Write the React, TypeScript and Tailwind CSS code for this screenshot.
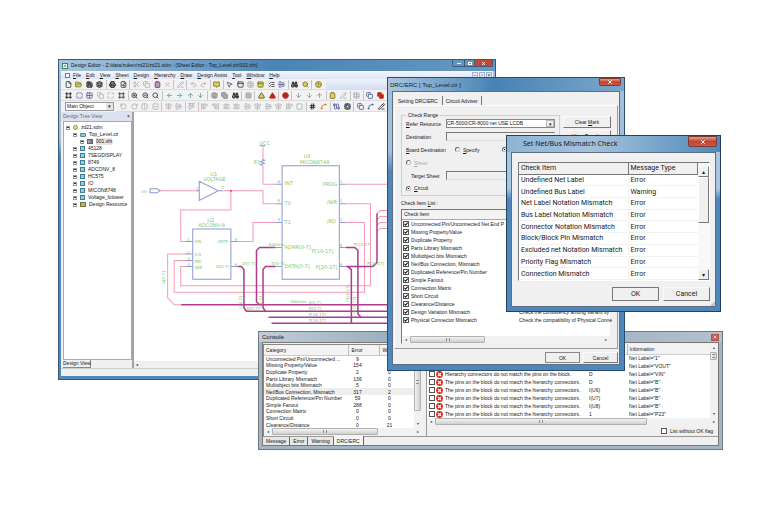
import React from 'react'
import {
  ArrowDown, ArrowLeft, ArrowRight, ArrowUp, AlignCenterHorizontal, AlignCenterVertical, AlignEndVertical,
  AlignStartHorizontal, AlignStartVertical, AlignVerticalDistributeCenter, Ban, BookOpen, Binoculars, Cable,
  CircleHelp, Copy, Cpu, File, FileSearch, FlipHorizontal, FlipVertical, FolderOpen, Frame, Grid2x2, Hash,
  Layers, ListChecks, Maximize, MousePointer2, PanelTop, PencilLine, Printer, Redo2, RotateCcw, RotateCw, Save,
  Scissors, Spline, Square, SquareDashed, Table, Triangle, Undo2, X, ZoomIn, ZoomOut, Search, Clipboard,
} from 'lucide-react'
import type { LucideIcon } from 'lucide-react'

type Tool = [string, LucideIcon, string]

const DARK = 'text-[#3c4048]'
const GREY = 'text-[#b4b4b8]'
const OLIVE = 'text-[#7d7a2c] fill-[#d8d060]'
const BLUE = 'text-[#5660a8]'
const CYAN = 'text-[#4aaec4]'
const RED = 'text-[#d83a2c] fill-[#a82820]'
const BLACK = 'text-[#222] fill-[#888]'

const fileTools: Tool[][] = [
  [['New', File, DARK], ['Open', FolderOpen, OLIVE], ['Save', Save, BLACK], ['Save all', Layers, BLACK]],
  [['Print', Printer, BLACK], ['Preview', FileSearch, DARK]],
  [['Cut', Scissors, GREY], ['Copy', Copy, GREY], ['Paste', Clipboard, 'text-[#6a4a78] fill-[#b79ab5]'], ['Delete', X, GREY]],
  [['Properties', PencilLine, GREY]],
  [['Undo', Undo2, GREY], ['Redo', Redo2, GREY]],
  [['Library', BookOpen, OLIVE]],
  [['Select', MousePointer2, BLUE], ['Window', PanelTop, DARK], ['List', Table, GREY], ['Edit table', PanelTop, OLIVE], ['Check', ListChecks, DARK], ['Hierarchy', AlignCenterHorizontal, BLUE]],
  [['Find', Binoculars, BLACK], ['Find next', Search, OLIVE]],
  [['Help', CircleHelp, OLIVE]],
]

const viewTools: Tool[][] = [
  [['Fit', Frame, 'text-[#222]'], ['Area', SquareDashed, BLUE], ['Grid', Grid2x2, BLUE], ['Layers', Copy, GREY], ['Extents', Maximize, GREY], ['Redraw', Frame, DARK]],
  [['Zoom in', ZoomIn, DARK], ['Zoom out', ZoomOut, DARK], ['Zoom', Search, DARK]],
  [['Pan left', ArrowLeft, CYAN], ['Pan right', ArrowRight, CYAN], ['Pan up', ArrowUp, CYAN], ['Pan down', ArrowDown, CYAN]],
  [['Stack', Layers, 'text-[#888] fill-[#aaa]'], ['Sheets', Copy, 'text-[#888] fill-[#aaa]'], ['Search', Binoculars, BLACK]],
  [['Stop', Square, 'text-[#b4b4b8] fill-[#b4b4b8]']],
  [['Mark', Triangle, 'text-[#55552c] fill-[#d8d060]'], ['Clear mark', Triangle, RED]],
  [['Cancel check', Ban, RED]],
  [['Down', ArrowDown, 'text-[#999]'], ['Next', ArrowDown, 'text-[#999]'], ['Up', ArrowUp, 'text-[#999]']],
  [['Note', Clipboard, OLIVE], ['Draft', PencilLine, GREY]],
  [['Table', Table, GREY]],
  [['Net', Copy, BLUE], ['Error net', Copy, RED]],
]

const objectTools: Tool[][] = [
  [['Rotate left', RotateCcw, GREY], ['Rotate right', RotateCw, GREY], ['Mirror', FlipHorizontal, GREY], ['Flip', FlipVertical, GREY]],
  [['Group', AlignCenterVertical, GREY], ['Ungroup', AlignCenterHorizontal, GREY]],
  [['Branch', AlignStartHorizontal, GREY]],
  [['Left', AlignStartVertical, GREY], ['Right', AlignEndVertical, GREY], ['Top', AlignVerticalDistributeCenter, GREY], ['Bottom', AlignVerticalDistributeCenter, GREY], ['Middle', AlignCenterHorizontal, GREY], ['Centre', AlignCenterVertical, GREY], ['Spread', AlignCenterHorizontal, GREY], ['Spread all', AlignCenterVertical, GREY], ['Pin', AlignStartVertical, GREY], ['Box', Square, GREY]],
  [['Show grid', Hash, 'text-[#222]'], ['Snap', Spline, 'text-[#d07a3a]']],
  [['Gate', Cable, BLUE], ['Part', Cpu, DARK]],
  [['Wire', Copy, BLUE], ['Bus', Spline, BLUE], ['Draw', PencilLine, DARK]],
]

const tree = ['45128', '7SEGDISPLAY', '8749', 'ADCONV_8', 'HC575', 'IO', 'MICON8748', 'Voltage_folower']

const checks = [
  'Unconnected Pin/Unconnected Net End P', 'Missing Property/Value', 'Duplicate Property',
  'Parts Library Mismatch', 'Multiobject bits Mismatch', 'Net/Bus Connection, Mismatch',
  'Duplicated Reference/Pin Number', 'Simple Fanout', 'Connection Matrix', 'Short Circuit',
  'Clearance/Distance', 'Design Variation Mismatch', 'Physical Connector Mismatch',
]

const totals: [string, number, string][] = [
  ['Unconnected Pin/Unconnected ...', 9, ''],
  ['Missing Property/Value', 154, '2'],
  ['Duplicate Property', 2, '0'],
  ['Parts Library Mismatch', 136, '0'],
  ['Multiobject bits Mismatch', 5, '0'],
  ['Net/Bus Connection, Mismatch', 317, '2'],
  ['Duplicated Reference/Pin Number', 59, '0'],
  ['Simple Fanout', 288, '0'],
  ['Connection Matrix', 0, '0'],
  ['Short Circuit', 0, '0'],
  ['Clearance/Distance', 0, '21'],
]

const PINS = 'The pins on the block do not match the hierarchy connectors.'
const messages: [string, string, string][] = [
  ['', '', '1'],
  ['', '', 'VOUT'],
  ['Hierarchy connectors do not match the pins on the block.', 'D', 'VIN'],
  [PINS, 'D', 'B'],
  [PINS, 'I(U6)', 'B'],
  [PINS, 'I(U7)', 'B'],
  [PINS, 'I(U8)', 'B'],
  [PINS, '1', 'P23'],
]

const mismatch = [
  ['Undefined Net Label', 'Error'],
  ['Undefined Bus Label', 'Warning'],
  ['Net Label Notation Mismatch', 'Error'],
  ['Bus Label Notation Mismatch', 'Error'],
  ['Connector Notation Mismatch', 'Error'],
  ['Block/Block Pin Mismatch', 'Error'],
  ['Excluded net Notation Mismatch', 'Error'],
  ['Priority Flag Mismatch', 'Error'],
  ['Connection Mismatch', 'Error'],
]

const Toolbar = ({ groups, className }: { groups: Tool[][]; className: string }) => (
  <div className={`flex h-[11px] items-center justify-between border-b border-[#dcdcdc] bg-[#f2f2f3] px-[3px] ${className}`}>
    {groups.map((group, i) => (
      <React.Fragment key={i}>
        {i > 0 && <span className="h-[9px] w-px bg-[#c4c4c8]" />}
        {group.map(([name, Icon, color]) => (
          <button key={name} aria-label={name} className="flex h-[9px] w-[9px] items-center justify-center">
            <Icon size={7} strokeWidth={3} className={color} />
          </button>
        ))}
      </React.Fragment>
    ))}
  </div>
)

const HScroll = ({ thumb, className = '' }: { thumb: string; className?: string }) => (
  <div className={`flex h-[8px] items-center bg-[#f1f1f1] text-[4px] leading-none text-[#444] ${className}`}>
    <span className="w-[8px] text-center">◂</span>
    <div className="h-full flex-1">
      <div className={`flex h-[7px] items-center justify-center rounded-[1px] border border-[#b0b0b0] bg-linear-to-b from-[#f4f4f4] to-[#cfcfd1] ${thumb}`}>
        <span className="h-[3px] w-[4px] border-x border-[#8c8c8c]" />
      </div>
    </div>
    <span className="w-[8px] text-center">▸</span>
  </div>
)

const VScroll = ({ thumb }: { thumb: string }) => (
  <div className="flex w-[8px] shrink-0 flex-col items-center bg-[#f1f1f1] text-[4px] leading-[8px] text-[#444]">
    <span>▴</span>
    <div className="w-full flex-1">
      <div className={`flex w-[7px] items-center justify-center rounded-[1px] border border-[#b0b0b0] bg-linear-to-r from-[#f4f4f4] to-[#cfcfd1] ${thumb}`}>
        <span className="h-[4px] w-[3px] border-y border-[#8c8c8c]" />
      </div>
    </div>
    <span>▾</span>
  </div>
)

const PushButton = ({ children, className }: { children: React.ReactNode; className: string }) => (
  <button className={`flex items-center justify-center border border-[#fafafa] border-r-[#777] border-b-[#777] bg-[#f0f0f0] ${className}`}>
    {children}
  </button>
)

const RedClose = ({ className }: { className: string }) => (
  <button aria-label="Close" className={`flex items-center justify-center rounded-b-[2px] border border-[#7d3a33] bg-linear-to-b from-[#dc9c8c] via-[#c4412c] to-[#c85a42] text-white ${className}`}>
    <X size={6} strokeWidth={4} />
  </button>
)

const Checkbox = ({ label, checked = false }: { label: string; checked?: boolean }) => (
  <span className="relative flex h-[6px] w-[6px] shrink-0">
    <input type="checkbox" aria-label={label} defaultChecked={checked} className="peer h-[6px] w-[6px] appearance-none border border-[#555] bg-white" />
    <svg viewBox="0 0 6 6" className="pointer-events-none absolute inset-0 hidden peer-checked:block" fill="none" stroke="#222" strokeWidth="1.1">
      <path d="M1.3 2.8 2.6 4.2 4.7 1.6" />
    </svg>
  </span>
)

const Radio = ({ label, name = 'range', checked = false, muted = false, hideLabel = false }: { label: string; name?: string; checked?: boolean; muted?: boolean; hideLabel?: boolean }) => (
  <label className={`flex items-center gap-[3px] ${muted ? 'text-[#aaa]' : ''}`}>
    <span className="relative flex h-[5px] w-[5px]">
      <input type="radio" name={name} aria-label={label} defaultChecked={checked} disabled={muted} className="peer h-[5px] w-[5px] appearance-none rounded-full border border-[#c4c4c4] border-t-[#666] border-l-[#666] bg-white" />
      <span className="absolute inset-[2px] hidden bg-black peer-checked:block" />
    </span>
    {!hideLabel && <span><u>{label[0]}</u>{label.slice(1)}</span>}
  </label>
)

// Green schematic annotations
const labels: [number, number, string, number][] = [
  [142, 194, 'vin', 4], [197, 191, '1', 4], [222, 190, '2', 4],
  [211, 177, 'U1', 5], [204, 182, 'VOLTAGE', 5], [208, 223, 'U2', 5], [199, 228, 'ADCONV-8', 5],
  [195, 243, 'VIN', 4], [195, 256, '/CS', 4], [195, 263, '/RD', 4], [195, 269, '/WR', 4],
  [218, 243, '/INTR', 4], [217, 268, 'D[0-7]', 4],
  [188, 241, '1', 4], [188, 254, '2', 4], [188, 260, '3', 4], [188, 266, '4', 4], [235, 241, '5', 4], [235, 266, '6', 4],
  [260, 146, 'VCC', 5], [254, 165, 'R1', 5], [304, 159, 'U3', 5], [300, 165, 'MICON8748', 5],
  [285, 186, 'INT', 5], [285, 206, 'T0', 5], [285, 225, 'T1', 5], [285, 249, 'ADRR[0-7]', 5], [285, 268, 'DATA[0-7]', 5],
  [323, 187, 'PROG', 5], [327, 205, '/WR', 5], [327, 224, '/RD', 5], [312, 253, 'P[10-17]', 5], [316, 269, 'P[20-27]', 5],
  [278, 184, '6', 4], [278, 203, '8', 4], [278, 222, '9', 4], [340, 184, '1', 4], [340, 203, '1', 4], [340, 222, '2', 4], [340, 247, '5', 4], [340, 266, '6', 4],
  [269, 246, 'Address', 4], [272, 265, 'D[0-7]', 4], [243, 265, 'D[0-7]', 4], [354, 246, 'P[10-17]', 4], [367, 265, 'P[20-27]', 4],
  [291, 303, 'Address', 4], [309, 304, 'A[0-7]', 4], [309, 310, 'D[0-7]', 4], [309, 316, 'P[10-17]', 4], [309, 322, 'P[20-27]', 4], [247, 310, 'D[0-7]', 4],
]

const Schematic = () => (
  <svg viewBox="135 113 358 248" preserveAspectRatio="xMinYMin slice" className="min-h-0 w-full flex-1 bg-white" fill="none">
    <g stroke="#f59ab3" strokeWidth="1">
      <path d="M161 191.5H198M222 191.5H263.500V204.500H276M231.500 191.500V210.500H181.500V242H188M188 254.500H168.500V298L175 305H182" />
      <path d="M188 261H175V292.500H364.500V223H346M188 267H181.500V286H370.500V204.500H346M238 242H253.500V223H276M263.500 147V160M263.500 166V185H276M346 185H387" />
      <path d="M377 215 380 211H387M377 221 380 217H387M377 226 380 223H387M377 232 380 229H387" />
    </g>
    <g stroke="#b03a8c" strokeWidth="1.5">
      <path d="M182 305H420M238 267H242L244.500 270V308L247 311.500H420M276 248H260L257 251V302L260 305M276 267H266L263.500 270V308L266 311.500M269 317.500H420" />
      <path d="M346 248H355L358 251V314L361 317.500M346 267H373L377 263V214M348 267 351.500 270V323.500M272 323.500H420" />
    </g>
    <g stroke="#8f97d4" strokeWidth="1">
      <path d="M151 189.500H158L161 191.500 158 193.500H151ZM200 182V201L219 191.500ZM197 191.500H200M219 191.500H223" />
      <path d="M193.500 229.500H231.500V279.500H193.500ZM282.500 166.500H339.500V279.500H282.500ZM187 242H193M187 254.500H193M187 261H193M187 267H193M232 242H238M232 267H238" />
      <path d="M276 185H282M276 204.500H282M276 223H282M276 248H282M276 267H282M340 185H346M340 204.500H346M340 223H346M340 248H346M340 267H346M260 146.500H266M263 160 265 161 261 162.500 265 164 261 165.500 263 166" />
    </g>
    <circle cx="231.500" cy="191.500" r="1" fill="#d0407c" />
    <g fill="#7cc769" fontFamily="'DejaVu Sans', sans-serif">
      {labels.map(([x, y, text, size], i) => (
        <text key={i} x={x} y={y} fontSize={size}>{text}</text>
      ))}
      <text transform="translate(166 284) rotate(-90)" fontSize="4">A[0-7]</text>
      <text transform="translate(243 309) rotate(-90)" fontSize="4">D[0-7]</text>
      <text transform="translate(262 309) rotate(-90)" fontSize="4">D[0-7]</text>
      <text transform="translate(349 302) rotate(-90)" fontSize="4">P[20-27]</text>
      <text transform="translate(356 314) rotate(-90)" fontSize="4">P[10-17]</text>
    </g>
  </svg>
)

const TreeRow = ({ name, depth, icon }: { name: string; depth: string; icon: React.ReactNode }) => (
  <li className={`flex flex-1 items-center gap-[3px] whitespace-nowrap ${depth}`}>
    <span className="flex h-[4px] w-[4px] items-center justify-center border border-[#999]"><i className="h-px w-[2px] bg-[#333]" /></span>
    {icon}
    <span className={name === '001.sht' ? 'bg-[#e4e4e4]' : ''}>{name}</span>
  </li>
)

const PartIcon = () => <span className="h-[5px] w-[5px] border border-[#3d7f96] bg-[#8fd0dd]" />
const FolderIcon = () => <span className="h-[4px] w-[6px] rounded-[1px] border border-[#4d8b93] bg-[#8ecbd2]" />

const MainWindow = () => (
  <section className="absolute top-[59px] left-[58px] flex h-[321px] w-[438px] flex-col border border-[#41576e] bg-linear-to-b from-[#a5bfd9] from-25% to-[#5089bd] to-30% px-[2px] pb-[3px] text-[5px] leading-[7px]">
    <header className="-mx-[2px] flex h-[11px] items-center gap-[3px] bg-linear-to-r from-[#a9c6df] via-[#4a84b5] via-50% to-[#6698c2] pl-[3px]">
      <span className="flex h-[6px] w-[6px] items-center justify-center border border-[#386] bg-[#dfe] text-[4px]">z</span>
      <h1 className="flex-1 whitespace-nowrap">Design Editor - Z:/data/zuken/zd21/zd21.sdm - [Sheet Editor - Top_Level.cir/001.sht]</h1>
      <div className="mr-[2px] flex h-[7px] self-start rounded-b-[2px] border border-t-0 border-[#3c5a78]">
        <button aria-label="Minimize" className="flex w-[11px] items-center justify-center"><i className="h-px w-[4px] bg-white" /></button>
        <button aria-label="Restore" className="flex w-[11px] items-center justify-center border-x border-[#3c5a78]"><i className="h-[3px] w-[4px] border border-white" /></button>
        <button aria-label="Close" className="flex w-[17px] items-center justify-center bg-[#c8452f] text-white"><X size={5} strokeWidth={4} /></button>
      </div>
    </header>
    <nav className="flex h-[8px] items-center bg-linear-to-b from-[#f5f7fc] to-[#dde3f3] pl-[4px]">
      <span className="mr-[3px] h-[5px] w-[5px] border border-[#667bb4] bg-white" />
      <ul className="flex flex-1 gap-[5px]">
        {['File', 'Edit', 'View', 'Sheet', 'Design', 'Hierarchy', 'Draw', 'Design Assist', 'Tool', 'Window', 'Help'].map(item => (
          <li key={item}><button><u>{item[0]}</u>{item.slice(1)}</button></li>
        ))}
      </ul>
      <div className="flex gap-px pr-[1px]">
        {['–', '▫', '×'].map(mark => (
          <button key={mark} className="flex h-[6px] w-[6px] items-center justify-center border border-[#a4b2ca] bg-[#e4ebf7] text-[5px] leading-none">{mark}</button>
        ))}
      </div>
    </nav>
    <div className="bg-linear-to-b from-[#eff2fb] to-[#d3dcf2]"><Toolbar groups={fileTools} className="w-[265px]" /></div>
    <div className="bg-[#f2f2f3]"><Toolbar groups={viewTools} className="w-[327px]" /></div>
    <div className="flex bg-[#f2f2f3]">
      <select aria-label="Object" className="my-px ml-[4px] h-[9px] w-[49px] appearance-none border border-[#999] bg-white pl-px text-[5px] leading-[7px]">
        <option>Main Object</option>
      </select>
      <span className="-ml-[8px] my-[2px] w-[7px] bg-[#e4e4e4] text-center text-[5px] leading-[7px]">▾</span>
      <Toolbar groups={objectTools} className="ml-[3px] w-[273px]" />
    </div>
    <div className="flex min-h-0 flex-1 bg-[#f0f0f0]">
      <aside className="flex w-[71px] shrink-0 flex-col">
        <h2 className="flex h-[9px] items-center justify-between bg-[#dde3ee] px-[2px] text-[#667]">Design Tree View <span className="text-[#111]">×</span></h2>
        <div className="ml-[2px] flex-1 border border-[#aaa] bg-white">
          <ul className="mt-[2px] flex h-[82px] flex-col pl-[2px]">
            <TreeRow name="zd21.sdm" depth="" icon={<span className="h-[5px] w-[5px] rounded-full border border-[#8d9a2f] bg-[#ece34b]" />} />
            <TreeRow name="Top_Level.cir" depth="pl-[7px]" icon={<FolderIcon />} />
            <TreeRow name="001.sht" depth="pl-[14px]" icon={<span className="h-[5px] w-[6px] border border-[#3d6f96] bg-linear-to-r from-[#8fb0dd] to-[#cf3a3a]" />} />
            {tree.map(name => <TreeRow key={name} name={name} depth="pl-[7px]" icon={<PartIcon />} />)}
            <TreeRow name="Design Resource" depth="pl-[7px]" icon={<span className="h-[5px] w-[6px] border border-[#77733b] bg-[#b9b170]" />} />
          </ul>
        </div>
        <button className="ml-[2px] h-[8px] w-[28px] border-r border-b border-[#888] whitespace-nowrap">Design View</button>
      </aside>
      <div className="flex min-w-0 flex-1 flex-col border-l-2 border-[#a2a2a2]">
        <Schematic />
        <span className="h-[7px] bg-[#efefed] pl-[2px] text-[4px] leading-[7px]">◂</span>
      </div>
    </div>
    <footer className="h-[8px] border-t border-[#ccc] bg-[#f0f0f0]" />
  </section>
)

const Console = () => (
  <section className="absolute top-[331px] left-[258px] flex h-[119px] w-[465px] flex-col border border-[#71777e] bg-[#a6b5c4] px-[3px] pb-[3px] text-[5px] leading-[6px]">
    <header className="-mx-[3px] flex h-[10px] items-center justify-between bg-linear-to-r from-[#c3ccd6] via-[#8aa3b8] via-40% to-[#b4c1ce] px-[3px]">
      <h2 className="text-[6px]">Console</h2>
      <button aria-label="Close" className="flex h-[7px] w-[8px] items-center justify-center border border-[#a55] bg-[#d0604c] text-white"><X size={4} strokeWidth={4} /></button>
    </header>
    <div className="flex min-h-0 flex-1 flex-col border border-[#777] bg-[#f0f0f0] pt-px">
      <div className="flex flex-1 gap-[4px]">
        <div className="flex w-[159px] shrink-0 flex-col self-start border-t border-l border-[#888] bg-white">
          <div className="flex">
            <table className="h-[83px] w-full table-fixed border-collapse">
              <thead>
                <tr className="h-[10px] border-b border-[#ccc] bg-[#f3f3f3]">
                  <th className="w-[84px] border-r border-[#bbb] p-0 pl-[2px] text-left font-normal">Category</th>
                  <th className="w-[31px] border-r border-[#bbb] p-0 pl-[3px] text-left font-normal">Error</th>
                  <th className="p-0 pl-[3px] text-left font-normal">W</th>
                </tr>
              </thead>
              <tbody>
                {totals.map(([name, errors, warnings]) => (
                  <tr key={name} className={name.startsWith('Net/Bus') ? 'bg-[#eeeeee]' : ''}>
                    <td className="p-0 pl-[2px] whitespace-nowrap">{name}</td>
                    <td className="p-0 pr-[12px] text-center">{errors}</td>
                    <td className="p-0 pr-[14px] text-center">{warnings}</td>
                  </tr>
                ))}
              </tbody>
            </table>
            <VScroll thumb="h-[58px]" />
          </div>
          <HScroll thumb="w-[106px]" />
        </div>
        <div className="flex min-w-0 flex-1 flex-col border-l border-[#999]">
          <div className="flex bg-white">
            <table className="w-full table-fixed border-collapse">
              <thead>
                <tr className="h-[10px] border-b border-[#ccc] bg-[#f3f3f3]">
                  <th className="w-[162px] p-0 pl-[2px] text-left font-normal">Message</th>
                  <th className="w-[38px] p-0 text-left font-normal">Object</th>
                  <th className="border-l border-[#bbb] p-0 pl-[2px] text-left font-normal">Information</th>
                </tr>
              </thead>
              <tbody>
                {messages.map(([text, object, label], i) => (
                  <tr key={i} className="h-[8px]">
                    <td className="p-0 pl-[2px]">
                      <div className="flex items-center gap-px whitespace-nowrap">
                        <Checkbox label={`Row ${i + 1}`} />
                        <svg viewBox="0 0 8 8" className="h-[7px] w-[7px] shrink-0"><circle cx="4" cy="4" r="3.900" fill="#d9291f" /><path d="M2.300 2.300 5.700 5.700M5.700 2.300 2.300 5.700" stroke="#fff" strokeWidth="1.300" /></svg>
                        <span className="pl-px">{text}</span>
                      </div>
                    </td>
                    <td className="p-0">{object}</td>
                    <td className="p-0 pl-[2px]">Net Label="{label}"</td>
                  </tr>
                ))}
              </tbody>
            </table>
            <VScroll thumb="h-[8px]" />
          </div>
          <HScroll thumb="w-[212px]" />
          <label className="mr-[5px] flex items-center gap-[3px] self-end pt-[2px]"><Checkbox label="List without OK flag" /> List without OK flag</label>
        </div>
      </div>
      <nav className="flex h-[9px] border-t border-[#999]">
        {['Message', 'Error', 'Warning', 'DRC/ERC'].map(tab => (
          <button key={tab} className={`border-r border-[#666] px-[3px] ${tab === 'DRC/ERC' ? '-mt-px bg-[#f6f6f6]' : 'bg-[#e8e8e8]'}`}>{tab}</button>
        ))}
      </nav>
    </div>
  </section>
)

const DrcDialog = () => (
  <section className="absolute top-[77px] left-[387px] flex h-[294px] w-[238px] flex-col border border-[#2c4c6c] bg-linear-to-b from-[#a3c0da] from-25% to-[#4d87bb] to-32% px-[4px] pb-[5px] text-[5px] leading-[8px]">
    <header className="-mx-[4px] flex h-[13px] justify-between bg-linear-to-r from-[#a9c6df] via-[#4783b5] via-45% to-[#7ca6ca] pl-[2px]">
      <h2 className="pt-[3px] text-[6px]">DRC/ERC [ Top_Level.cir ]</h2>
      <RedClose className="mr-[3px] h-[8px] w-[22px]" />
    </header>
    <div className="flex flex-1 flex-col border border-[#5d6f81] bg-[#f0f0f0] px-px pt-[4px]">
      <nav className="flex h-[9px]">
        <button className="border-r border-[#777] px-[4px]">Setting DRC/ERC</button>
        <button className="border-r border-[#777] px-[3px]">Circuit Adviser</button>
      </nav>
      <div className="flex-1 border border-white border-r-[#999] border-b-[#999] px-[6px] pt-[5px]">
        <div className="flex items-start gap-[3px]">
          <fieldset className="w-[159px] border border-[#cfcfcf] px-[4px] pb-[3px]">
            <legend className="px-[2px]">Check Range</legend>
            <div className="grid grid-cols-[40px_1fr] items-center gap-y-[4px]">
              <label htmlFor="resource"><u>R</u>efer Resource</label>
              <div className="flex h-[9px] border border-[#888] bg-white">
                <select id="resource" className="min-w-0 flex-1 appearance-none text-[5px] leading-[7px]"><option>CR-5000/CR-8000 net USE LCDB</option></select>
                <span className="w-[8px] border border-[#bbb] bg-[#eee] text-center text-[5px] leading-[6px]">▾</span>
              </div>
              <label htmlFor="destination">Destination</label>
              <input id="destination" className="h-[9px] w-full border border-[#ddd] border-t-[#777] border-l-[#777] bg-[#f0f0f0]" />
              <div className="col-span-2 flex h-[9px] items-center">
                <span className="w-[49px]"><u>B</u>oard Destination</span>
                <Radio label="Specify" name="board" />
                <span className="w-[23px]" />
                <Radio label="All" name="board" checked hideLabel />
              </div>
              <div className="col-span-2 flex h-[9px] items-center"><Radio label="Sheet" muted /></div>
              <label htmlFor="target" className="pl-[5px]">Target Sheet</label>
              <input id="target" className="h-[9px] w-full border border-[#ddd] border-t-[#777] border-l-[#777] bg-[#f0f0f0]" />
              <div className="col-span-2 flex h-[8px] items-center"><Radio label="Circuit" checked /></div>
            </div>
          </fieldset>
          <div className="flex flex-1 flex-col gap-[2px] pt-[5px]">
            <PushButton className="h-[12px] w-full"><span>Clear <u>M</u>ark</span></PushButton>
            <PushButton className="h-[12px] w-full"><span><u>V</u>iew Results</span></PushButton>
          </div>
        </div>
        <h3 className="pt-[3px] pb-[2px]">Check Item <u>L</u>ist :</h3>
        <div className="h-[135px] border border-[#eee] border-t-[#777] border-l-[#777] bg-white">
          <table className="w-full table-fixed border-collapse">
            <thead>
              <tr className="h-[9px] border-b border-[#aaa] bg-[#f3f3f3]">
                <th className="w-[117px] p-0 pl-[2px] text-left font-normal">Check Item</th>
                <th className="p-0 text-left font-normal">Description</th>
              </tr>
            </thead>
            <tbody>
              {checks.map(name => (
                <tr key={name} className="h-[8px]">
                  <td className="p-0 pl-px"><div className="flex items-center gap-[2px] whitespace-nowrap"><Checkbox label={name} checked />{name}</div></td>
                  <td className="p-0 whitespace-nowrap">
                    {name.startsWith('Design') && 'Check the consistency among Variant sy'}
                    {name.startsWith('Physical') && 'Check the compatibility of Physical Conne'}
                  </td>
                </tr>
              ))}
            </tbody>
          </table>
          <HScroll thumb="w-[75px]" className="mt-[12px]" />
        </div>
      </div>
      <div className="flex justify-end gap-[3px] pt-[3px] pb-px">
        <PushButton className="h-[11px] w-[35px] outline-1 -outline-offset-1 outline-[#888]">OK</PushButton>
        <PushButton className="h-[11px] w-[35px]">Cancel</PushButton>
      </div>
    </div>
  </section>
)

const MismatchDialog = () => (
  <section className="absolute top-[135px] left-[506px] flex h-[177px] w-[215px] flex-col border border-[#26415c] bg-linear-to-b from-[#a9c6df] from-30% to-[#4d87bb] to-36% px-[4px] pb-[4px] font-['Roboto','Liberation_Sans',sans-serif] text-[7px] leading-[10px]">
    <header className="-mx-[4px] flex h-[17px] justify-between bg-linear-to-r from-[#8fb4d3] via-[#a3c2dc] via-40% to-[#4f89bb] pl-[16px]">
      <h2 className="pt-[3px] font-['Noto_Sans'] text-[7px]">Set Net/Bus Mismatch Check</h2>
      <RedClose className="mr-[3px] h-[11px] w-[29px]" />
    </header>
    <div className="flex flex-1 flex-col border border-[#5d6f81] bg-[#f0f0f0] pt-[9px] pr-[5px] pl-[6px]">
      <div className="flex border border-white border-t-[#777] border-l-[#777] bg-white">
        <table className="h-[117px] w-full table-fixed border-collapse">
          <thead>
            <tr className="h-[11px] bg-[#f0f0f0]">
              <th className="w-[109px] border-r border-b border-[#777] p-0 pl-[2px] text-left font-normal">Check Item</th>
              <th className="border-r border-b border-[#777] p-0 pl-[2px] text-left font-normal">Message Type</th>
            </tr>
          </thead>
          <tbody>
            {mismatch.map(([name, type]) => (
              <tr key={name} className="border-b border-[#f2f2f2]">
                <td className="border-r border-[#f2f2f2] p-0 pl-[2px] whitespace-nowrap">{name}</td>
                <td className="p-0 pl-[2px]">{type}</td>
              </tr>
            ))}
          </tbody>
        </table>
        <div className="flex w-[11px] shrink-0 flex-col bg-[#f8f8f8] text-[6px] leading-[9px]">
          <PushButton className="mt-[3px] h-[11px] w-full">▴</PushButton>
          <div className="h-[46px] border border-white border-r-[#777] border-b-[#777] bg-[#f0f0f0]" />
          <div className="flex-1" />
          <PushButton className="h-[11px] w-full">▾</PushButton>
        </div>
      </div>
      <div className="flex justify-end gap-[4px] pt-[6px]">
        <PushButton className="h-[14px] w-[47px] outline-1 -outline-offset-1 outline-[#777]">OK</PushButton>
        <PushButton className="h-[14px] w-[47px]">Cancel</PushButton>
      </div>
      <svg viewBox="0 0 7 7" className="mt-auto -mr-[5px] h-[5px] w-[5px] self-end" stroke="#999"><path d="M1 7 7 1M3 7 7 3M5 7 7 5" /></svg>
    </div>
  </section>
)

const App = () => (
  <main className="relative min-h-screen overflow-hidden bg-white font-['Liberation_Sans',sans-serif] text-[#16181c]">
    <MainWindow />
    <Console />
    <DrcDialog />
    <MismatchDialog />
  </main>
)

export default App
